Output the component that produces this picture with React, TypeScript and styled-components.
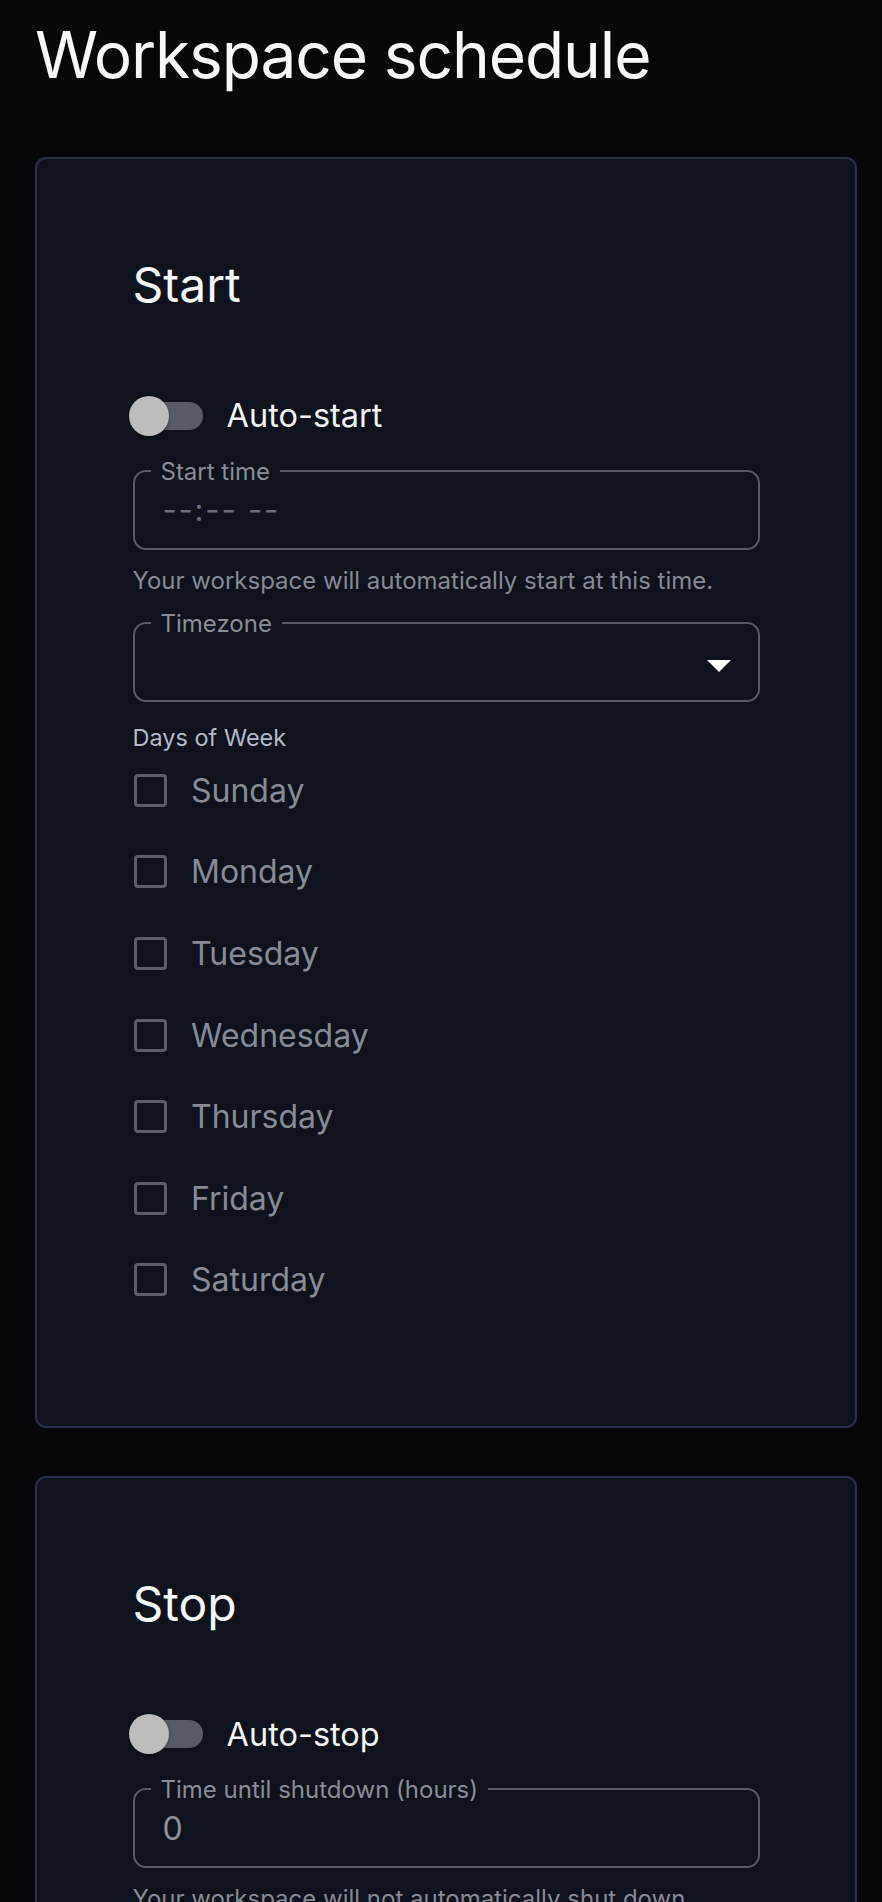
import React from "react";
import styled, { createGlobalStyle } from "styled-components";

const days = ["Sunday", "Monday", "Tuesday", "Wednesday", "Thursday", "Friday", "Saturday"];

const GlobalStyle = createGlobalStyle`
    body {
        margin: 0;
        background: #05070b;
        font-family: Inter, "Noto Sans", "Liberation Sans", sans-serif;
    }
`;

const Switch: React.FC = () => (
    <SwitchTrack>
        <SwitchThumb />
    </SwitchTrack>
);

interface FieldProps {
    label: string;
    children?: React.ReactNode;
}

const OutlinedField: React.FC<FieldProps> = ({ label, children }) => (
    <FieldBox>
        <FieldLabel>{label}</FieldLabel>
        {children}
    </FieldBox>
);

const App: React.FC = () => {
    return (
        <Page>
            <GlobalStyle />
            <PageTitle>Workspace schedule</PageTitle>

            <Card>
                <SectionTitle>Start</SectionTitle>
                <ToggleRow>
                    <Switch />
                    <ToggleLabel>Auto-start</ToggleLabel>
                </ToggleRow>
                <OutlinedField label="Start time">
                    <Placeholder>--:-- --</Placeholder>
                </OutlinedField>
                <HelperText>Your workspace will automatically start at this time.</HelperText>
                <SelectSpacer />
                <OutlinedField label="Timezone">
                    <span />
                    <DropArrow width="24" height="12" viewBox="0 0 24 12">
                        <path d="M0 0 L24 0 L12 12 Z" fill="#ffffff" />
                    </DropArrow>
                </OutlinedField>
                <GroupLabel>Days of Week</GroupLabel>
                <DayList>
                    {days.map((day) => (
                        <DayRow key={day}>
                            <CheckBox />
                            <DayLabel>{day}</DayLabel>
                        </DayRow>
                    ))}
                </DayList>
            </Card>

            <Card>
                <SectionTitle>Stop</SectionTitle>
                <ToggleRow>
                    <Switch />
                    <ToggleLabel>Auto-stop</ToggleLabel>
                </ToggleRow>
                <OutlinedField label="Time until shutdown (hours)">
                    <FieldValue>0</FieldValue>
                </OutlinedField>
                <HelperText>Your workspace will not automatically shut down.</HelperText>
            </Card>
        </Page>
    );
};

export default App;

const Page = styled.div`
    padding: 16px 25px 40px 35px;
    display: flex;
    flex-direction: column;
    gap: 48px;
`;

const PageTitle = styled.h1`
    margin: 0 0 16px;
    font-size: 64px;
    line-height: 77px;
    font-weight: 400;
    letter-spacing: -1.1px;
    color: #f7f8fa;
`;

const Card = styled.section`
    width: 822px;
    box-sizing: border-box;
    background: #0e121c;
    border: 2px solid #28324b;
    border-radius: 11px;
    padding: 97px 95.5px 105px;
    display: flex;
    flex-direction: column;
`;

const SectionTitle = styled.h2`
    margin: 0;
    font-size: 48px;
    line-height: 57.6px;
    font-weight: 400;
    color: #f5f6f8;
`;

const ToggleRow = styled.div`
    display: flex;
    align-items: center;
    gap: 24px;
    height: 40px;
    margin: 82px 0 34px -4px;
`;

const SwitchTrack = styled.div`
    position: relative;
    width: 68px;
    height: 28px;
    margin-left: 6px;
    border-radius: 14px;
    background: #585b66;
`;

const SwitchThumb = styled.div`
    position: absolute;
    left: -6px;
    top: -6px;
    width: 40px;
    height: 40px;
    border-radius: 50%;
    background: #bdbdbd;
    box-shadow: 0 1px 3px rgba(0, 0, 0, 0.4);
`;

const ToggleLabel = styled.span`
    font-size: 32.5px;
    color: #f3f4f6;
`;

const FieldBox = styled.div`
    position: relative;
    height: 80px;
    box-sizing: border-box;
    border: 2px solid #565a66;
    border-radius: 13px;
    padding: 0 27px 0 28px;
    display: flex;
    align-items: center;
    justify-content: space-between;
`;

const FieldLabel = styled.span`
    position: absolute;
    left: 16px;
    top: -12px;
    padding: 0 10px;
    background: #0e121c;
    font-size: 24px;
    line-height: 23px;
    color: #898d98;
`;

const Placeholder = styled.span`
    font-size: 31px;
    letter-spacing: 1.8px;
    color: #6a6e79;
`;

const FieldValue = styled.span`
    font-size: 32px;
    color: #8e929c;
`;

const DropArrow = styled.svg`
    display: block;
    margin-top: 8px;
`;

const HelperText = styled.p`
    margin: 15px 0 0;
    font-size: 24px;
    line-height: 32px;
    color: #868a95;
`;

const SelectSpacer = styled.div`
    height: 25px;
`;

const GroupLabel = styled.div`
    margin-top: 24px;
    font-size: 23.5px;
    line-height: 24px;
    color: #b4bac8;
`;

const DayList = styled.div`
    display: flex;
    flex-direction: column;
`;

const DayRow = styled.label`
    display: flex;
    align-items: center;
    height: 81.6px;
    gap: 24px;
`;

const CheckBox = styled.span`
    width: 33px;
    height: 33px;
    margin-left: 1.5px;
    box-sizing: border-box;
    border: 3px solid #5b5e67;
    border-radius: 4px;
`;

const DayLabel = styled.span`
    font-size: 32px;
    color: #878b96;
`;
